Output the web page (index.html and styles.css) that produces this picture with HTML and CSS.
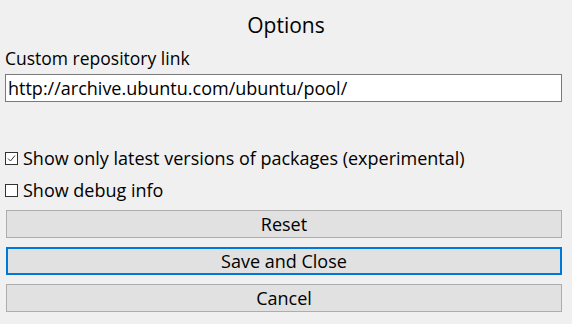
FILE: index.html
```html
<!DOCTYPE html>
<html lang="en">
<head>
    <meta charset="UTF-8">
    <title>Options</title>
    <link rel="stylesheet" href="styles.css">
</head>
<body>
    <div class="dialog">
        <div class="title">Options</div>
        <div class="label">Custom repository link</div>
        <input class="repo-input" type="text" value="http://archive.ubuntu.com/ubuntu/pool/">

        <div class="options">
            <label class="check">
                <span class="box checked">
                    <svg width="9" height="9" viewBox="0 0 9 9"><path d="M1 4.5 L3.5 7 L8 1.5" fill="none" stroke="#333" stroke-width="1"/></svg>
                </span>
                Show only latest versions of packages (experimental)
            </label>
            <label class="check">
                <span class="box"></span>
                Show debug info
            </label>
        </div>

        <div class="buttons">
            <button class="btn">Reset</button>
            <button class="btn default">Save and Close</button>
            <button class="btn">Cancel</button>
        </div>
    </div>
</body>
</html>
```

FILE: styles.css
```css
html, body {
    margin: 0;
    padding: 0;
    background: #f0f0f0;
    font-family: "Open Sans", "DejaVu Sans", sans-serif;
    color: #000;
}
.dialog {
    display: flex;
    flex-direction: column;
    padding: 11px 10px 0 5px;
}
.title {
    text-align: center;
    font-size: 21px;
    line-height: 28px;
    padding-left: 5px;
}
.label {
    font-size: 17.5px;
    line-height: 22px;
    margin-top: 8px;
    padding-left: 0;
}
.repo-input {
    margin: 5px 0 0 0;
    height: 28px;
    box-sizing: border-box;
    border: 1px solid #7a7a7a;
    background: #fff;
    font-family: inherit;
    font-size: 18px;
    padding: 0 2px;
    outline: none;
}
.options {
    display: flex;
    flex-direction: column;
    gap: 10px;
    margin-top: 45px;
}
.check {
    display: flex;
    align-items: center;
    gap: 5px;
    font-size: 18px;
    line-height: 22px;
}
.box {
    width: 13px;
    height: 13px;
    box-sizing: border-box;
    border: 1px solid #333;
    background: #fff;
    display: flex;
    align-items: center;
    justify-content: center;
}
.buttons {
    display: flex;
    flex-direction: column;
    gap: 9px;
    margin-top: 9px;
    padding-left: 1px;
}
.btn {
    height: 28px;
    box-sizing: border-box;
    background: #e1e1e1;
    border: 1px solid #adadad;
    font-family: inherit;
    font-size: 18px;
    color: #000;
    padding: 0;
}
.btn.default {
    border: 2px solid #0078d7;
}
```
